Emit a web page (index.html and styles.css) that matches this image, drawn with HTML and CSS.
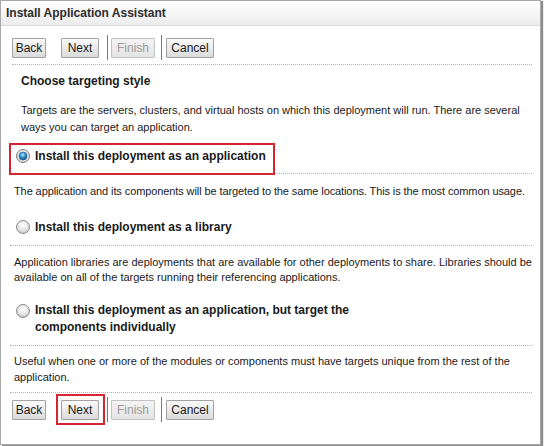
FILE: index.html
```html
<!DOCTYPE html>
<html>
<head>
<meta charset="utf-8">
<link rel="stylesheet" href="styles.css">
</head>
<body>
<div class="panel">
  <div class="titlebar">Install Application Assistant</div>
  <div class="content">
    <div class="toolbar">
      <button class="btn btn-back">Back</button>
      <button class="btn btn-next">Next</button>
      <span class="sep sep-1"></span>
      <button class="btn btn-finish" disabled>Finish</button>
      <span class="sep sep-2"></span>
      <button class="btn btn-cancel">Cancel</button>
    </div>
    <div class="rule rule-top"></div>
    <h2 class="heading">Choose targeting style</h2>
    <p class="intro">Targets are the servers, clusters, and virtual hosts on which this deployment will run. There are several ways you can target an application.</p>

    <div class="option option-1 marked">
      <svg class="radio" width="14" height="14" viewBox="0 0 14 14">
        <defs>
          <radialGradient id="rbg" cx="50%" cy="40%" r="60%">
            <stop offset="0" stop-color="#ffffff"/>
            <stop offset="1" stop-color="#d6d6d6"/>
          </radialGradient>
          <radialGradient id="dot" cx="45%" cy="35%" r="65%">
            <stop offset="0" stop-color="#c8ecff"/>
            <stop offset="0.45" stop-color="#3d9ad6"/>
            <stop offset="1" stop-color="#0d4f86"/>
          </radialGradient>
        </defs>
        <circle cx="7" cy="7" r="6.5" fill="url(#rbg)" stroke="#7b7b7b"/>
        <circle cx="7" cy="7" r="4" fill="url(#dot)" stroke="#1d5b8e" stroke-width="0.6"/>
      </svg>
      <span class="label">Install this deployment as an application</span>
    </div>
    <div class="rule rule-1"></div>
    <p class="desc desc-1">The application and its components will be targeted to the same locations. This is the most common usage.</p>

    <div class="option option-2">
      <svg class="radio" width="14" height="14" viewBox="0 0 14 14">
        <defs>
          <radialGradient id="rbg2" cx="50%" cy="35%" r="65%">
            <stop offset="0" stop-color="#ffffff"/>
            <stop offset="0.6" stop-color="#e6e6e6"/>
            <stop offset="1" stop-color="#c4c4c4"/>
          </radialGradient>
        </defs>
        <circle cx="7" cy="7" r="6.5" fill="url(#rbg2)" stroke="#8a8a8a"/>
      </svg>
      <span class="label">Install this deployment as a library</span>
    </div>
    <div class="rule rule-2"></div>
    <p class="desc desc-2">Application libraries are deployments that are available for other deployments to share. Libraries should be available on all of the targets running their referencing applications.</p>

    <div class="option option-3">
      <svg class="radio" width="14" height="14" viewBox="0 0 14 14">
        <circle cx="7" cy="7" r="6.5" fill="url(#rbg2)" stroke="#8a8a8a"/>
      </svg>
      <span class="label">Install this deployment as an application, but target the<br>components individually</span>
    </div>
    <div class="rule rule-3"></div>
    <p class="desc desc-3">Useful when one or more of the modules or components must have targets unique from the rest of the application.</p>
    <div class="rule rule-4"></div>

    <div class="toolbar toolbar-bottom">
      <button class="btn btn-back">Back</button>
      <button class="btn btn-next marked-btn">Next</button>
      <span class="sep sep-1"></span>
      <button class="btn btn-finish" disabled>Finish</button>
      <span class="sep sep-2"></span>
      <button class="btn btn-cancel">Cancel</button>
    </div>
  </div>
</div>
</body>
</html>
```

FILE: styles.css
```css
html, body {
  margin: 0;
  padding: 0;
  background: #ffffff;
}
body {
  width: 544px;
  height: 446px;
  overflow: hidden;
  font-family: "Liberation Sans", Arial, sans-serif;
  font-size: 11px;
  color: #1a1a1a;
}
.panel {
  box-sizing: border-box;
  width: 541px;
  height: 445px;
  border: 1px solid #a8a8a8;
  box-shadow: 2px 1px 1px #8c8c8c;
  background: #ffffff;
}
.titlebar {
  height: 24px;
  line-height: 24px;
  padding-left: 5px;
  border-bottom: 1px solid #dcdcdc;
  background: linear-gradient(#ffffff, #ececec);
  font-weight: bold;
  font-size: 12px;
  color: #2c2c2c;
}
.content {
  padding: 9px 8px 0 9px;
}
.toolbar {
  display: flex;
  align-items: center;
  height: 25px;
  padding-left: 2px;
}
.btn {
  box-sizing: border-box;
  height: 20px;
  padding: 0;
  margin: 0;
  border: 1px solid #a3a3a3;
  border-radius: 1px;
  background: linear-gradient(#fbfbfb, #e9e9e9 55%, #dadada);
  font-family: "Liberation Sans", Arial, sans-serif;
  font-size: 12px;
  color: #1a1a1a;
  line-height: 18px;
  text-align: center;
}
.btn-back { width: 34px; }
.btn-next { width: 38px; margin-left: 15px; }
.btn-finish {
  width: 44px;
  margin-left: 3px;
  color: #9c9c9c;
  border-color: #c2c2c2;
  background: linear-gradient(#f4f4f4, #e4e4e4);
}
.btn-cancel { width: 48px; margin-left: 4px; }
.sep {
  display: block;
  width: 1px;
  height: 25px;
  background: #7a7a7a;
}
.sep-1 { margin-left: 8px; }
.sep-2 { margin-left: 6px; }
.rule {
  height: 0;
  border-top: 1px dotted #b4b4b4;
}
.rule-top { margin-top: 4px; margin-left: 2px; }
.heading {
  margin: 8px 0 0 11px;
  font-size: 12px;
  line-height: 16px;
  font-weight: bold;
  color: #1a1a1a;
}
.intro {
  margin: 13px -6px 0 11px;
  line-height: 17px;
}
p { margin: 0; }
.option {
  display: flex;
  align-items: flex-start;
  padding-left: 6px;
  font-size: 12px;
  font-weight: bold;
  line-height: 16px;
  color: #1a1a1a;
}
.radio {
  flex: none;
  margin: 1px 5px 0 0;
}
.option-1 { margin-top: 12px; position: relative; }
.option-1::after {
  content: "";
  position: absolute;
  left: -1px;
  top: -5px;
  width: 266px;
  height: 32px;
  box-sizing: border-box;
  border: 2px solid #d52530;
}
.rule-1 { margin-top: 9px; }
.desc { padding-left: 4px; margin-right: -6px; line-height: 16px; }
.desc-1 { margin-top: 9px; letter-spacing: -0.1px; }
.option-2 { margin-top: 20px; }
.rule-2 { margin-top: 10px; }
.desc-2 { margin-top: 9px; line-height: 15px; }
.option-3 { margin-top: 17px; line-height: 17px; }
.option-3 .radio { margin-top: 2px; }
.rule-3 { margin-top: 9px; }
.desc-3 { margin-top: 7px; }
.rule-4 { margin-top: 7px; }
.toolbar-bottom { margin-top: 4px; }
.marked-btn { position: relative; overflow: visible; }
.marked-btn::after {
  content: "";
  position: absolute;
  left: -6px;
  top: -7px;
  width: 49px;
  height: 31px;
  box-sizing: border-box;
  border: 2px solid #d52530;
}
```
